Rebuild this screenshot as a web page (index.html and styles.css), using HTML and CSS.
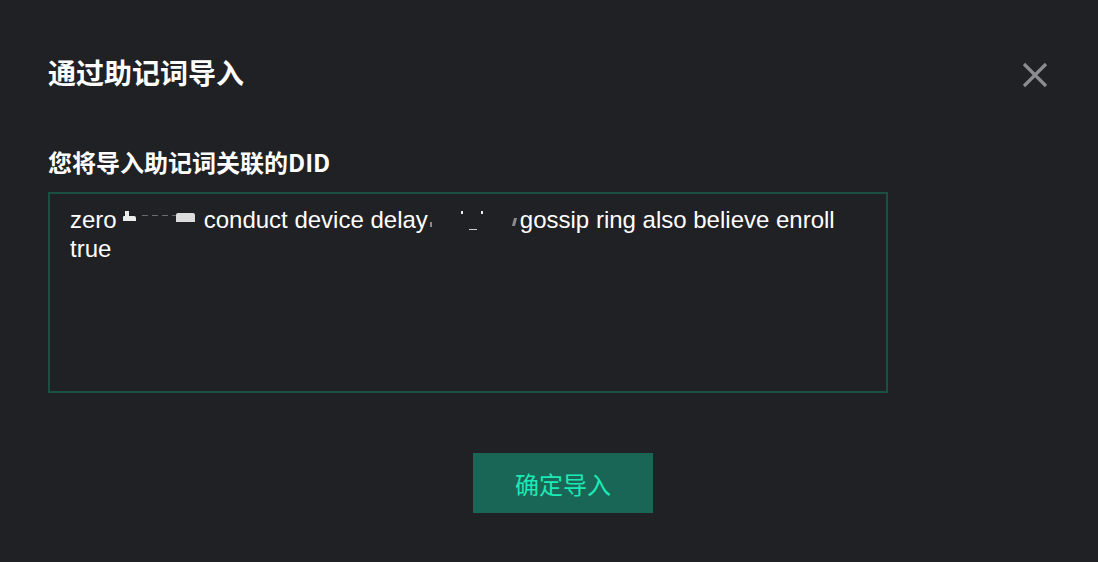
FILE: index.html
```html
<!DOCTYPE html>
<html lang="zh">
<head>
<meta charset="utf-8">
<title>通过助记词导入</title>
<link rel="stylesheet" href="styles.css">
</head>
<body>
<div class="dialog">
  <div class="dialog-header">
    <h1 class="dialog-title">通过助记词导入</h1>
    <button class="close-btn" aria-label="关闭">
      <svg width="26" height="26" viewBox="0 0 26 26"><path d="M2 2 L24 24 M24 2 L2 24" stroke="#8b8c8e" stroke-width="3.2" stroke-linecap="butt"/></svg>
    </button>
  </div>
  <h2 class="field-label">您将导入助记词关联的DID</h2>
  <div class="mnemonic-box">zero<span class="redact r1"><i class="m m1"></i><i class="m m1b"></i><i class="m dash"></i><i class="m m2"></i></span>conduct device delay<span class="redact r2"><i class="m c1"></i><i class="m d1"></i><i class="m d2"></i><i class="m u1"></i><i class="m c2"></i></span>gossip ring also believe enroll true</div>
  <div class="dialog-footer">
    <button class="confirm-btn">确定导入</button>
  </div>
</div>
</body>
</html>
```
FILE: styles.css
```css
html, body {
  margin: 0;
  padding: 0;
  background: #202124;
  height: 100%;
}
body {
  font-family: "Liberation Sans", Arial, "Noto Sans CJK SC", sans-serif;
  color: #ffffff;
}
.dialog {
  padding: 54px 50px 0 48px;
}
.dialog-header {
  display: flex;
  justify-content: space-between;
  align-items: center;
  height: 36px;
}
.dialog-title {
  margin: 0;
  font-size: 28px;
  font-weight: bold;
  line-height: 36px;
  font-family: "Noto Sans CJK SC", sans-serif;
}
.close-btn {
  background: none;
  border: 0;
  padding: 0;
  width: 26px;
  height: 26px;
  margin-top: 6px;
  cursor: pointer;
}
.close-btn svg { display: block; }
.field-label {
  margin: 56px 0 0;
  font-size: 24px;
  line-height: 32px;
  font-weight: bold;
  font-family: "Noto Sans CJK SC", sans-serif;
}
.mnemonic-box {
  box-sizing: border-box;
  margin-top: 14px;
  width: 840px;
  height: 201px;
  border: 2px solid #1a5040;
  padding: 11px 20px 0 20px;
  font-size: 24px;
  line-height: 29px;
  font-family: "Liberation Sans", Arial, sans-serif;
  color: #ffffff;
}
.redact {
  display: inline-block;
  position: relative;
  vertical-align: baseline;
  height: 1px;
}
.r1 { width: 87px; }
.r2 { width: 92px; }
.m {
  position: absolute;
  background: #ececec;
}
.m1 { left: 6px; width: 13px; height: 5px; bottom: 7px; border-radius: 1px 2px 0 0; }
.m1b { left: 8px; width: 4px; height: 10px; bottom: 7px; }
.dash { left: 25px; width: 34px; height: 1px; bottom: 12px; background: repeating-linear-gradient(90deg, #6a6b6e 0 6px, transparent 6px 10px); }
.m2 { left: 59px; width: 19px; height: 9px; bottom: 6px; background: #dcdcdc; border-radius: 2px 2px 0 0; }
.c1 { left: 2px; width: 2px; height: 5px; bottom: 1px; background: #8a8a8a; }
.d1 { left: 33px; width: 2px; height: 3px; bottom: 14px; }
.d2 { left: 53px; width: 2px; height: 3px; bottom: 14px; }
.u1 { left: 41px; width: 8px; height: 1px; bottom: -2px; background: #cfcfcf; }
.c2 { left: 85px; width: 3px; height: 8px; bottom: 2px; background: #8a8a8a; transform: skewX(-15deg); }
.dialog-footer {
  display: flex;
  margin-top: 60px;
  padding-left: 425px;
}
.confirm-btn {
  width: 180px;
  height: 60px;
  background: #1a6656;
  border: 0;
  color: #1de9b6;
  font-size: 24px;
  font-family: "Noto Sans CJK SC", sans-serif;
  cursor: pointer;
}
```
